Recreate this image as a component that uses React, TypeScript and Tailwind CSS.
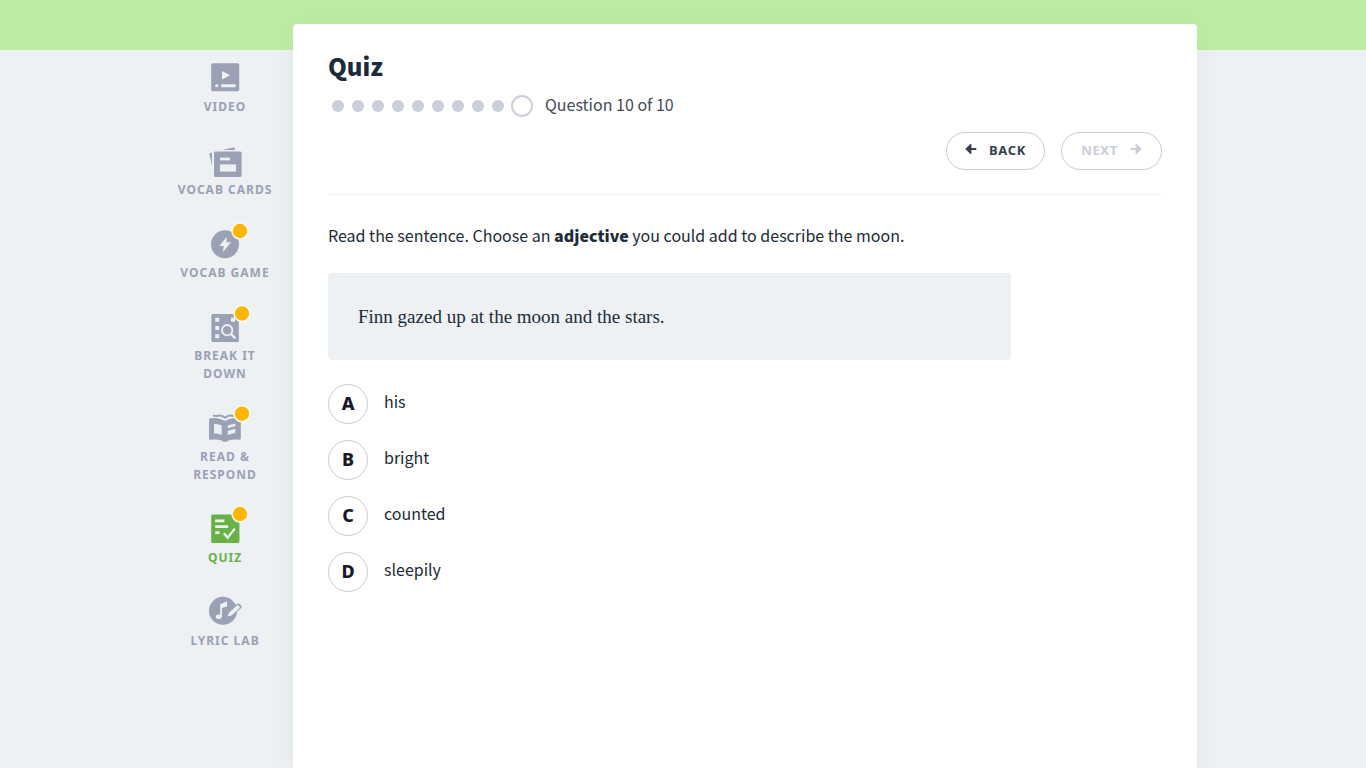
import type { ReactNode } from "react";

const SANS = "font-['Noto_Sans_CJK_SC','Noto_Sans',sans-serif]";

function Badge({ x, y }: { x: number; y: number }) {
  return <circle cx={x} cy={y} r="8" fill="#ffb600" stroke="#f8fafb" strokeWidth="1.6" />;
}

function VideoIcon() {
  return (
    <>
      <rect x="6.2" y="5.3" width="28" height="28" rx="1.5" fill="currentColor" />
      <path d="M17 13l8.2 4.3L17 21.6z" fill="#edf1f4" />
      <circle cx="11.8" cy="27.7" r="1.6" fill="#edf1f4" />
      <rect x="16" y="26.2" width="14.8" height="3" rx="1" fill="#edf1f4" />
    </>
  );
}

function CardsIcon() {
  return (
    <>
      <path d="M17.3 9L29.3 6.2l.8 2.8zM4.3 12.2L7 11.5V25z" fill="currentColor" />
      <rect x="9" y="10.6" width="27.6" height="25.4" rx="1.5" fill="currentColor" />
      <rect x="15" y="16.6" width="10" height="2.8" fill="#edf1f4" />
      <rect x="15" y="23.4" width="16" height="7.2" fill="#edf1f4" />
    </>
  );
}

function GameIcon() {
  return (
    <>
      <circle cx="20" cy="20.3" r="14" fill="currentColor" />
      <path d="M21.8 12.8L14.3 22h4.5l-.9 6.2L26 18.2h-4.6z" fill="#edf1f4" />
      <Badge x={35} y={7} />
    </>
  );
}

function BreakIcon() {
  return (
    <>
      <rect x="6.4" y="7" width="27.4" height="28" rx="1.5" fill="currentColor" />
      <path d="M10.2 10.7h4v4h-4zM10.2 19h4v4h-4zM10.2 27.3h4v4h-4zM26 10.7h4v4h-4z" fill="#edf1f4" />
      <circle cx="22.2" cy="23.2" r="5.2" fill="none" stroke="#edf1f4" strokeWidth="1.8" />
      <path d="M26 27l4.4 4.4" stroke="#edf1f4" strokeWidth="2.2" />
      <Badge x={37} y={6.5} />
    </>
  );
}

function ReadIcon() {
  return (
    <>
      <path d="M8 7.4q2 1.2 5 .3q3-.8 7 2q4-2.800 7-2q3 .9 5-.3" fill="none" stroke="currentColor" strokeWidth="2" />
      <path
        d="M5.5 10.3q8-1.2 14.5 2.7q6-3.900 14.300-2.700q1.500.2 1.500 1.700v18.200q0 1.500-1.500 1.500q-7.300-.4-11 .8q-1 1.400-3.300 1.400t-3.300-1.400q-4-1.200-11.200-.8Q4 31.700 4 30.200V12q0-1.500 1.500-1.700z"
        fill="currentColor"
      />
      <path d="M9 15.8q4 .1 7.700 1.800v9.300q-3.700-1.600-7.700-1.700z" fill="#edf1f4" />
      <path d="M22.8 17.6q3.5-1.600 7.500-1.900v2.600q-3.800.5-7.500 2zM22.800 23q3.500-1.500 7.500-2v3.900q-4 .4-7.500 2z" fill="#edf1f4" />
      <Badge x={37} y={5.7} />
    </>
  );
}

function QuizIcon() {
  return (
    <>
      <rect x="6.2" y="5.4" width="28.2" height="28.6" rx="1.5" fill="currentColor" />
      <path d="M10.2 10.6h9.2v2.6h-9.2zM10.2 16.3h13v2.7h-13zM10.2 22.3h4.3v2.7h-4.3z" fill="#edf1f4" />
      <path d="M18.8 24.2l3.8 4.4 7.2-9" fill="none" stroke="#edf1f4" strokeWidth="2.3" />
      <Badge x={35} y={5} />
    </>
  );
}

function LyricIcon() {
  return (
    <>
      <circle cx="18" cy="18.8" r="14" fill="currentColor" />
      <ellipse cx="13.7" cy="24.7" rx="2.9" ry="2.3" fill="#edf1f4" />
      <path d="M15.2 25V12.3l6.8-3v5.2l-5 1.5v9z" fill="#edf1f4" />
      <path d="M24.5 22.5L33.3 14.7" stroke="currentColor" strokeWidth="6" strokeLinecap="round" />
      <path d="M22.2 24.4l2-4 7.2-6.5q1.700-1.100 2.800 0t.2 2.700l-7.600 6.700z" fill="#edf1f4" />
    </>
  );
}

const activities: { label: string; icon: ReactNode; active?: boolean }[] = [
  { label: "Video", icon: <VideoIcon /> },
  { label: "Vocab Cards", icon: <CardsIcon /> },
  { label: "Vocab Game", icon: <GameIcon /> },
  { label: "Break It Down", icon: <BreakIcon /> },
  { label: "Read & Respond", icon: <ReadIcon /> },
  { label: "Quiz", icon: <QuizIcon />, active: true },
  { label: "Lyric Lab", icon: <LyricIcon /> },
];

const answers = [
  { letter: "A", text: "his" },
  { letter: "B", text: "bright" },
  { letter: "C", text: "counted" },
  { letter: "D", text: "sleepily" },
];

function Sidebar() {
  return (
    <nav className="w-28 shrink-0 pt-[58px]">
      <ul className="flex flex-col gap-[25px]">
        {activities.map((item) => (
          <li key={item.label}>
            <a
              href="#"
              className={`flex flex-col items-center ${item.active ? "text-[#66b245]" : "text-[#9aa1b5]"}`}
            >
              <svg viewBox="0 0 40 40" className="size-10 overflow-visible" aria-hidden="true">
                {item.icon}
              </svg>
              <span className="px-1 text-center font-['Noto_Sans',sans-serif] text-[12px] leading-[18px] font-bold tracking-[1px] uppercase">
                {item.label}
              </span>
            </a>
          </li>
        ))}
      </ul>
    </nav>
  );
}

function Progress() {
  return (
    <div className="mt-3 flex items-center">
      <div className="flex items-center gap-2 pl-1">
        {Array.from({ length: 9 }, (_, i) => (
          <span key={i} className="size-3 rounded-full bg-[#cbcfd9]" />
        ))}
        <span className="-ml-px size-[22px] rounded-full border-2 border-[#cbcfd9]" />
      </div>
      <p className="ml-3 pb-1 text-base leading-5 text-[#434a59]">Question 10 of 10</p>
    </div>
  );
}

function Arrow({ flip }: { flip?: boolean }) {
  return (
    <svg viewBox="0 0 12 10" className={`mb-1 h-[10px] w-3 ${flip ? "rotate-180" : ""}`} aria-hidden="true">
      <path d="M5.5 1.2L1.5 5l4 3.8zM2 5h9.3" fill="currentColor" stroke="currentColor" strokeWidth="1.8" />
    </svg>
  );
}

export default function App() {
  return (
    <div className={`min-h-screen bg-[linear-gradient(#beeda6_50px,#edf1f4_50px)] text-[#1c2b39] ${SANS}`}>
      <div className="mx-auto flex min-h-screen max-w-[1028px] gap-3">
        <Sidebar />
        <main className="mt-6 min-w-0 flex-1 rounded-t bg-white px-[35px] pt-[26px] shadow-[0_0_30px_rgba(30,50,70,0.06)]">
          <h1 className="text-2xl leading-8 font-black">Quiz</h1>
          <Progress />

          <div className="mt-[14px] flex justify-end gap-4 border-b border-[#edeff2] pb-6 font-['Noto_Sans',sans-serif] text-[13px] font-bold tracking-wider">
            <button className="flex h-[38px] w-[99px] items-center justify-center gap-3 rounded-full border border-[#cbcbd9] text-[#38404f]">
              <Arrow />
              BACK
            </button>
            <button disabled className="flex h-[38px] w-[101px] items-center justify-center gap-3 rounded-full border border-[#cbcbd9] text-[#c9ced8]">
              NEXT
              <Arrow flip />
            </button>
          </div>

          <p className="mt-[26px] text-base leading-7">
            Read the sentence. Choose an <strong className="font-black">adjective</strong> you could add to describe the moon.
          </p>
          <blockquote className="mt-6 max-w-[683px] rounded-sm bg-[#edf1f4] px-[30px] py-[30px] font-['Liberation_Serif',serif] text-[19px] leading-[27px]">
            Finn gazed up at the moon and the stars.
          </blockquote>

          <ul className="mt-6 flex flex-col gap-4">
            {answers.map((answer) => (
              <li key={answer.letter}>
                <button className="flex items-center gap-4 text-left">
                  <span className="flex size-10 items-center justify-center rounded-full border border-[#cbcbd9] pb-0.5 font-['Noto_Sans',sans-serif] text-lg leading-6 font-extrabold text-[#191828]">
                    {answer.letter}
                  </span>
                  <span className="pb-1.5 text-base leading-6">{answer.text}</span>
                </button>
              </li>
            ))}
          </ul>
        </main>
      </div>
    </div>
  );
}
